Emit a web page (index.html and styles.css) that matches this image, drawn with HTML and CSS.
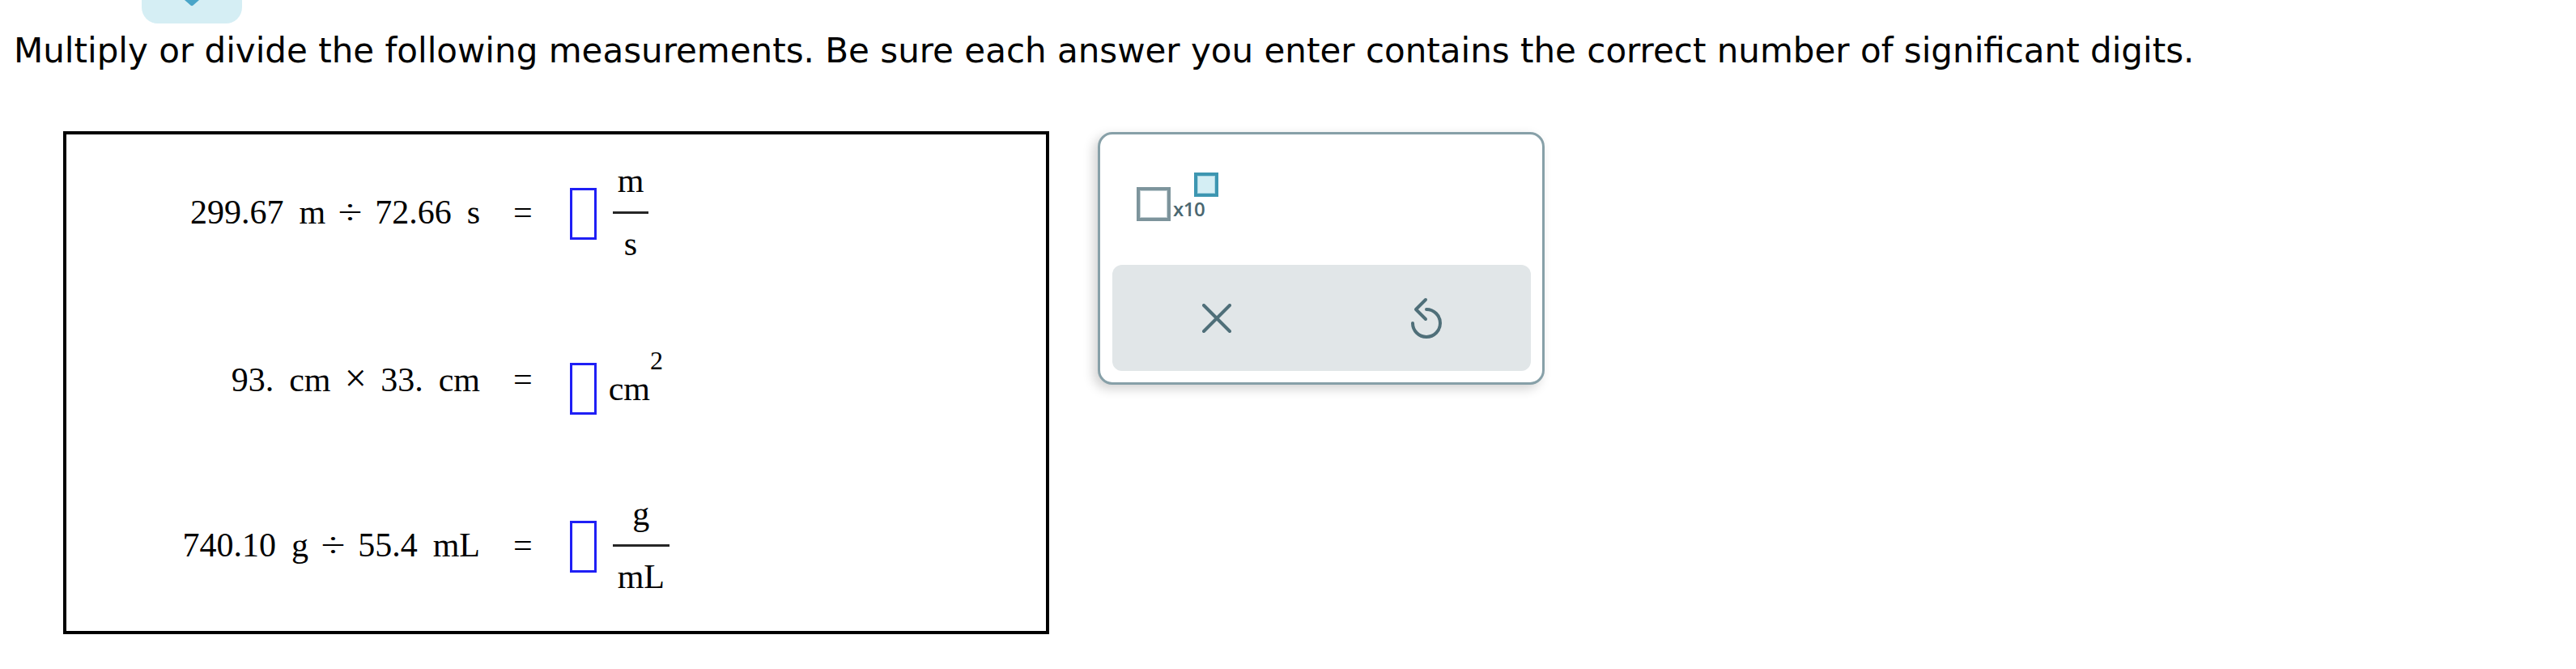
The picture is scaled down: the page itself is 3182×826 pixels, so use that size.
FILE: index.html
```html
<!DOCTYPE html>
<html lang="en">
<head>
  <meta charset="UTF-8">
  <meta name="viewport" content="width=device-width, initial-scale=1.0">
  <title>Significant digits - multiply or divide</title>
  <link rel="stylesheet" href="styles.css">
</head>
<body>
  <!-- Aba recolhida no topo -->
  <div class="tab">
    <svg class="tab-arrow" width="18" height="8" viewBox="0 0 18 8">
      <path d="M0 0 L18 0 L10.6 6.6 Q9 7.9 7.4 6.6 Z" fill="#4aa5c8"/>
    </svg>
  </div>

  <p class="prompt">Multiply or divide the following measurements. Be sure each answer you enter contains the correct number of significant digits.</p>

  <div class="work">
    <!-- Problemas -->
    <div class="problems">
      <div class="row">
        <div class="expr">299.67 m <span class="op op-div">÷</span> 72.66 s</div>
        <div class="eq">=</div>
        <div class="answer">
          <span class="blank"></span>
          <span class="frac"><span class="num">m</span><span class="den">s</span></span>
        </div>
      </div>

      <div class="row">
        <div class="expr">93. cm <span class="op op-times">×</span> 33. cm</div>
        <div class="eq">=</div>
        <div class="answer answer-sq">
          <span class="blank"></span>
          <span class="unit-sq"><span>cm</span><sup>2</sup></span>
        </div>
      </div>

      <div class="row">
        <div class="expr">740.10 g <span class="op op-div">÷</span> 55.4 mL</div>
        <div class="eq">=</div>
        <div class="answer">
          <span class="blank"></span>
          <span class="frac"><span class="num">g</span><span class="den">mL</span></span>
        </div>
      </div>
    </div>

    <!-- Teclado de resposta -->
    <div class="keypad">
      <div class="sci">
        <span class="base-box"></span>
        <span class="x10">x10</span>
        <span class="exp-box"></span>
      </div>
      <div class="pad-buttons">
        <button class="pad-btn" aria-label="Clear">
          <svg width="36" height="36" viewBox="0 0 36 36">
            <path d="M2 2 L34 34 M34 2 L2 34" stroke="#4f6f79" stroke-width="4" stroke-linecap="round" fill="none"/>
          </svg>
        </button>
        <button class="pad-btn" aria-label="Undo">
          <svg width="44" height="54" viewBox="0 0 44 54">
            <path d="M22 16 A17 17 0 1 1 5 33" stroke="#4f6f79" stroke-width="4" stroke-linecap="round" fill="none"/>
            <path d="M21 4 L9 16 L21 28" stroke="#4f6f79" stroke-width="4" stroke-linecap="round" stroke-linejoin="round" fill="none"/>
          </svg>
        </button>
      </div>
    </div>
  </div>
</body>
</html>
```

FILE: styles.css
```css
/* Reset e configurações básicas */
* {
  box-sizing: border-box;
}

body {
  margin: 0;
  background: #fff;
  color: #000;
  font-family: "DejaVu Sans", sans-serif;
}

/* Aba do topo */
.tab {
  width: 124px;
  height: 29px;
  margin-left: 175px;
  background: #d5eef4;
  border-radius: 0 0 20px 20px;
  display: flex;
  justify-content: center;
  align-items: flex-start;
}

.tab-arrow {
  display: block;
}

/* Enunciado */
.prompt {
  margin: 10px 0 0 17px;
  font-size: 42px;
  line-height: 48px;
}

.work {
  display: flex;
  align-items: flex-start;
  gap: 60px;
  margin: 75px 0 0 78px;
}

/* Caixa dos problemas */
.problems {
  width: 1218px;
  border: 4px solid #000;
  padding: 36px 0 46px;
  display: flex;
  flex-direction: column;
  gap: 101px;
  font-family: "Liberation Serif", serif;
  font-size: 42px;
}

.row {
  display: flex;
  align-items: center;
}

.expr {
  width: 511px;
  text-align: right;
  line-height: 48px;
  word-spacing: 8.5px;
  white-space: nowrap;
}

/* Sinais de operação mais largos, mesma largura de layout */
.op {
  display: inline-block;
}

.op-div {
  transform: scaleX(1.3);
}

.op-times {
  font-size: 48px;
  margin: 0 -1.7px;
}

.eq {
  margin-left: 41px;
  line-height: 48px;
}

.answer {
  display: flex;
  align-items: center;
  margin-left: 46px;
}

.blank {
  width: 33px;
  height: 64px;
  margin-top: 4px;
  border: 3px solid #1f1ff5;
}

/* Fração das unidades */
.frac {
  display: flex;
  flex-direction: column;
  margin-left: 20px;
  text-align: center;
  line-height: 42px;
}

.num {
  padding: 0 6px 17px;
  border-bottom: 3px solid #262626;
}

.den {
  padding: 16px 6px 0;
}

/* Unidade ao quadrado */
.answer-sq {
  align-items: flex-end;
  padding-top: 25px;
}

.answer-sq .blank {
  margin-top: 0;
}

.unit-sq {
  display: flex;
  align-items: flex-start;
  margin: 0 0 11px 15px;
  line-height: 42px;
}

.unit-sq sup {
  font-size: 32px;
  line-height: 32px;
  margin-top: -30px;
  vertical-align: baseline;
}

/* Teclado */
.keypad {
  width: 552px;
  height: 312px;
  margin-top: 1px;
  padding: 0 14px 14px 15px;
  border: 3px solid #87a0a8;
  border-radius: 18px;
  background: #fff;
  box-shadow: -5px 5px 14px rgba(0, 0, 0, 0.18);
  display: flex;
  flex-direction: column;
  font-family: "Open Sans", sans-serif;
}

.sci {
  height: 107px;
  padding: 47px 0 0 30px;
  display: flex;
  align-items: flex-end;
}

.base-box {
  width: 42px;
  height: 42px;
  border: 4px solid #7d949c;
  box-shadow: inset 0 0 0 1px #c3d0d4;
}

.x10 {
  margin: 0 0 3px 3px;
  font-size: 24px;
  font-weight: 600;
  line-height: 24px;
  letter-spacing: -0.5px;
  color: #4a6770;
}

.exp-box {
  align-self: flex-start;
  width: 30px;
  height: 30px;
  margin-left: -13px;
  border: 4px solid #3d96b1;
  background: #d4eef4;
  box-shadow: inset 0 0 0 1px #a9d6e2;
}

.pad-buttons {
  margin-top: auto;
  height: 131px;
  display: flex;
  background: #e1e6e8;
  border-radius: 12px;
}

.pad-btn {
  flex: 1;
  display: flex;
  align-items: center;
  justify-content: center;
  padding: 0;
  border: 0;
  background: none;
  cursor: pointer;
}

.pad-btn svg {
  display: block;
}
```
